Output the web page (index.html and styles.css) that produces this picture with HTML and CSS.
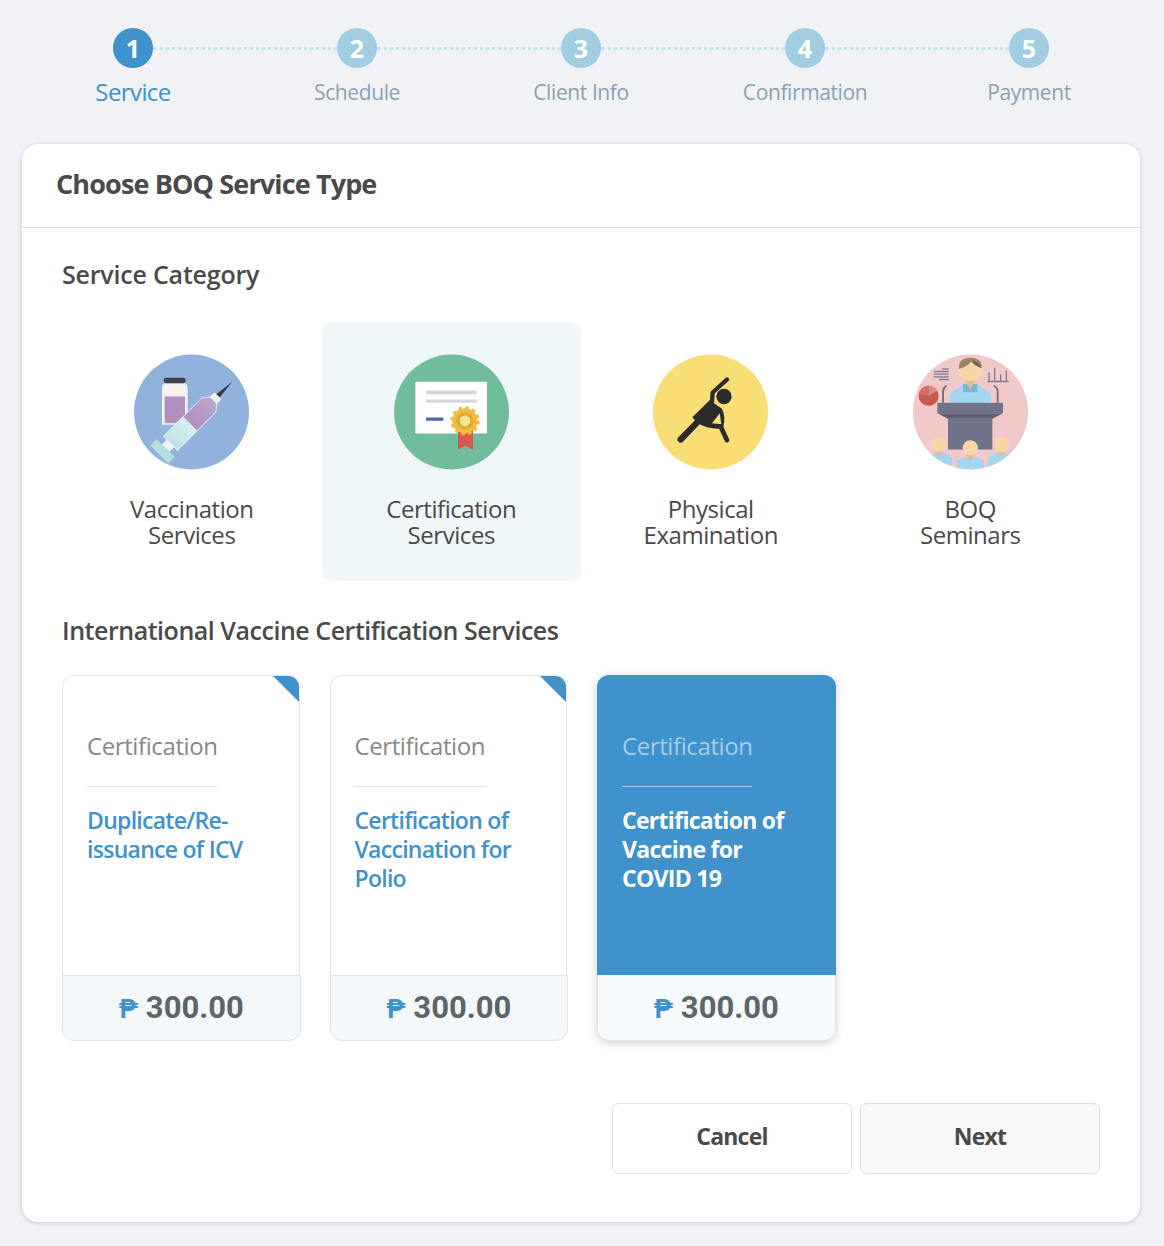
FILE: index.html
```html
<!DOCTYPE html>
<html lang="en">
<head>
<meta charset="utf-8">
<title>Choose BOQ Service Type</title>
<link rel="stylesheet" href="styles.css">
</head>
<body>
<ol class="stepper">
  <li class="step is-current"><span class="step-num">1</span><span class="step-label">Service</span></li>
  <li class="step"><span class="step-num">2</span><span class="step-label">Schedule</span></li>
  <li class="step"><span class="step-num">3</span><span class="step-label">Client Info</span></li>
  <li class="step"><span class="step-num">4</span><span class="step-label">Confirmation</span></li>
  <li class="step"><span class="step-num">5</span><span class="step-label">Payment</span></li>
</ol>
<main class="panel">
  <h1 class="panel-title">Choose BOQ Service Type</h1>
  <div class="panel-body">
    <h2 class="section-title">Service Category</h2>
    <div class="tiles">
      <div class="tile">
        <svg class="tile-icon" viewBox="42 42 345 345">
          <defs>
            <linearGradient id="pur" x1="0" y1="0" x2="1" y2="0"><stop offset="0" stop-color="#b18fc0"/><stop offset="1" stop-color="#bba6cb"/></linearGradient>
            <linearGradient id="bar" x1="0" y1="0" x2="1" y2="0"><stop offset="0" stop-color="#bfe2e3"/><stop offset="1" stop-color="#d8eeee"/></linearGradient>
          </defs>
          <circle cx="214.5" cy="214.5" r="172.5" fill="#91b2dc"/>
          <path d="M133 128Q126 132 126 146V253H203V146Q203 132 196 128z" fill="#f6f0f1"/>
          <rect x="134" y="168" width="61" height="80" fill="#b08fbe"/>
          <rect x="131" y="112" width="66" height="16" rx="7" fill="#3d4149"/>
          <g transform="translate(128 332) rotate(-45)">
            <path d="M232-7L295 0 232 7z" fill="#33363d"/>
            <rect x="216" y="-15" width="19" height="30" rx="4" fill="#e8f4f4"/>
            <rect x="-14" y="-38" width="27" height="76" fill="#b6dedd"/>
            <rect x="13" y="-16" width="22" height="32" fill="#eef7f6"/>
            <path d="M32-31H196L218-14V14L196 31H32z" fill="#eef6f6"/>
            <path d="M34-29H117V29H34z" fill="url(#bar)"/>
            <path d="M117-29H195L215-13V13L195 29H117z" fill="url(#pur)"/>
          </g>
        </svg>
        <p class="tile-label">Vaccination<br>Services</p>
      </div>
      <div class="tile is-active">
        <svg class="tile-icon" viewBox="42 42 345 345">
          <circle cx="214.5" cy="214.5" r="172.5" fill="#71bd9b"/>
          <rect x="106" y="124" width="215" height="155" rx="2" fill="#fff"/>
          <rect x="138" y="150" width="152" height="11" rx="2" fill="#d6d6de"/>
          <rect x="138" y="177" width="152" height="10" rx="2" fill="#d6d6de"/>
          <rect x="138" y="231" width="52" height="10" rx="2" fill="#4a67ae"/>
          <path d="M234 262H279V328L256 315 234 328z" fill="#d9584d"/>
          <circle cx="255" cy="241" r="38" fill="#f2bc41"/>
          <circle cx="255" cy="241" r="40" fill="none" stroke="#f2bc41" stroke-width="8" stroke-dasharray="10.47 10.47"/>
          <circle cx="255" cy="241" r="26" fill="#e0a93c"/>
          <circle cx="255" cy="241" r="16" fill="#f5e690"/>
        </svg>
        <p class="tile-label">Certification<br>Services</p>
      </div>
      <div class="tile">
        <svg class="tile-icon" viewBox="40 42 345 345">
          <circle cx="212.5" cy="214.5" r="172.5" fill="#f9de75"/>
          <circle cx="253" cy="168" r="23" fill="#2b2b2b"/>
          <path d="M262 117L219 156 217 184" fill="none" stroke="#2b2b2b" stroke-width="13" stroke-linecap="round" stroke-linejoin="round"/>
          <path d="M123 297L182 236" fill="none" stroke="#2b2b2b" stroke-width="19" stroke-linecap="round"/>
          <path d="M243 258L262 299" fill="none" stroke="#2b2b2b" stroke-width="14" stroke-linecap="round"/>
          <path fill-rule="evenodd" d="M210 179L246 204Q260 226 250 264Q205 268 172 247L158 230zM240 218L217 248 245 251z" fill="#2b2b2b"/>
        </svg>
        <p class="tile-label">Physical<br>Examination</p>
      </div>
      <div class="tile">
        <svg class="tile-icon" viewBox="40 42 345 345">
          <defs><clipPath id="disc"><circle cx="212.5" cy="214.5" r="172.5"/></clipPath></defs>
          <circle cx="212.5" cy="214.5" r="172.5" fill="#f2c9c9"/>
          <g clip-path="url(#disc)">
            <path d="M150 190V160L190 130H233L273 160V190z" fill="#a4d6f2"/>
            <rect x="190" y="130" width="43" height="25" fill="#7fb8ce"/>
            <path d="M197 118H226L212 148z" fill="#e8b98b"/>
            <circle cx="212" cy="87" r="35" fill="#f8d6a8"/>
            <path d="M178 85Q175 52 212 52Q248 52 246 82Q228 78 215 62Q205 78 178 85z" fill="#9c8468"/>
            <path d="M215 62Q235 58 246 82Q228 78 215 62z" fill="#75614c"/>
            <path d="M130 187V152Q130 142 141 135" fill="none" stroke="#70738a" stroke-width="6"/>
            <path d="M294 187V152Q294 142 282 135" fill="none" stroke="#70738a" stroke-width="6"/>
            <rect x="113" y="187" width="197" height="31" fill="#70738a"/>
            <path d="M113 218H310L278 235H145z" fill="#5d5f75"/>
            <rect x="145" y="235" width="133" height="92" fill="#70738a"/>
            <circle cx="87" cy="166" r="30" fill="#c9594f"/>
            <path d="M87 166V136A30 30 0 0 1 113 151z" fill="#dc8a82"/>
            <path d="M87 166L58 160A30 30 0 0 1 87 136z" fill="#d56e64"/>
            <path d="M127 85h20M102 93h45M102 101h45M102 109h45M118 117h29" stroke="#7b7d92" stroke-width="4"/>
            <path d="M263 123h64M268 123v-27M285 123V82M303 123v-22M320 123V90" stroke="#7b7d92" stroke-width="4" fill="none"/>
            <path d="M97 342L117 330 157 350V395H60V345z" fill="#a4d6f2"/>
            <path d="M171 360L212 345 253 360V395H171z" fill="#a4d6f2"/>
            <path d="M265 350L306 330 326 342 365 345V395H265z" fill="#a4d6f2"/>
            <path d="M104 330H130L117 352zM199 340H225L212 362zM293 330H319L306 352z" fill="#e8b98b"/>
            <circle cx="117" cy="312" r="23" fill="#f8d6a8"/>
            <circle cx="212" cy="322" r="23" fill="#f8d6a8"/>
            <circle cx="306" cy="312" r="23" fill="#f8d6a8"/>
          </g>
        </svg>
        <p class="tile-label">BOQ<br>Seminars</p>
      </div>
    </div>
    <h2 class="section-title section-title-services">International Vaccine Certification Services</h2>
    <div class="services">
      <article class="service is-flagged">
        <div class="service-main">
          <p class="service-kind">Certification</p>
          <h3 class="service-name">Duplicate/Re-<br>issuance of ICV</h3>
        </div>
        <p class="service-price"><span class="peso">₱</span> 300.00</p>
      </article>
      <article class="service is-flagged">
        <div class="service-main">
          <p class="service-kind">Certification</p>
          <h3 class="service-name">Certification of<br>Vaccination for<br>Polio</h3>
        </div>
        <p class="service-price"><span class="peso">₱</span> 300.00</p>
      </article>
      <article class="service is-selected">
        <div class="service-main">
          <p class="service-kind">Certification</p>
          <h3 class="service-name">Certification of<br>Vaccine for<br>COVID 19</h3>
        </div>
        <p class="service-price"><span class="peso">₱</span> 300.00</p>
      </article>
    </div>
    <div class="actions">
      <button class="btn" type="button">Cancel</button>
      <button class="btn btn-next" type="button">Next</button>
    </div>
  </div>
</main>
</body>
</html>
```

FILE: styles.css
```css
* { box-sizing: border-box; }
html, body { margin: 0; }
body {
  background: #f0f2f6;
  font-family: "Open Sans", "Noto Sans", sans-serif;
  color: #4a4a4a;
  padding: 28px 21px 24px;
}
h1, h2, h3, p, ol { margin: 0; padding: 0; }

.stepper { display: grid; grid-template-columns: repeat(5, 224px); list-style: none; }
.step { position: relative; display: flex; flex-direction: column; align-items: center; }
.step:not(:last-child)::after {
  content: "";
  position: absolute;
  left: 132px;
  width: 184px;
  top: 19px;
  border-top: 3px dotted #bfe3f5;
}
.step-num {
  width: 40px; height: 40px; border-radius: 50%;
  background: #a3cde3; color: #fff;
  display: flex; align-items: center; justify-content: center;
  font-size: 25px; font-weight: 700;
}
.step-label { margin-top: 9px; font-size: 21px; letter-spacing: -.4px; line-height: 30px; color: #8ba2b2; }
.is-current .step-num { background: #3f92cb; }
.is-current .step-label { color: #3f92cb; font-size: 24px; letter-spacing: -.6px; margin-top: 8px; line-height: 31px; }

.panel {
  margin: 37px 1px 0;
  width: 1118px;
  height: 1078px;
  background: #fff;
  border-radius: 16px;
  box-shadow: 0 1px 4px rgba(60, 70, 90, .22);
}
.panel-title {
  height: 84px;
  padding: 21px 34px 0;
  font-size: 27px; letter-spacing: -.87px; line-height: 38px; font-weight: 700; color: #4a4a4a;
  border-bottom: 1px solid #dcdfe3;
}
.panel-body { padding: 29px 40px 0; }
.section-title { font-size: 25px; letter-spacing: -.2px; line-height: 34px; font-weight: 600; color: #4a4a4a; }
.section-title-services { margin-top: 32px; letter-spacing: -.47px; }

.tiles { display: grid; grid-template-columns: repeat(4, 259.5px); margin-top: 31px; }
.tile { height: 259px; padding-top: 32px; display: flex; flex-direction: column; align-items: center; border-radius: 10px; }
.tile.is-active { background: #eff7f9; }
.tile-icon { width: 115px; height: 116px; display: block; }
.tile-label { margin-top: 26px; font-size: 24px; letter-spacing: -.45px; line-height: 26px; text-align: center; color: #4a4a4a; }

.services { display: flex; gap: 29px; margin-top: 28px; }
.service {
  position: relative;
  width: 238.5px; height: 366px;
  display: flex; flex-direction: column;
  border-radius: 12px;
}
.service-main {
  flex: 1;
  margin-right: 1px;
  padding: 55px 24px 0;
  background: #fff;
  border: 1px solid #e6e6e6; border-bottom: 0;
  border-radius: 12px 12px 0 0;
  overflow: hidden;
  position: relative;
}
.is-flagged .service-main::after {
  content: "";
  position: absolute; top: 0; right: 0;
  border-style: solid;
  border-width: 0 26px 26px 0;
  border-color: transparent #3f92cb transparent transparent;
}
.service-kind {
  width: 130px; height: 56px;
  font-size: 24px; letter-spacing: -.4px; line-height: 30px; color: #888;
  border-bottom: 1px solid #e2e2e2;
}
.service-name { margin-top: 19px; font-size: 23px; letter-spacing: -.72px; line-height: 29px; font-weight: 600; color: #3f92cb; }
.service-price {
  height: 66px;
  background: #f4f8fb;
  border: 1px solid #dfe5ea;
  border-radius: 0 0 12px 12px;
  font-family: Roboto, sans-serif;
  font-size: 31px; line-height: 64px; font-weight: 700; text-align: center; color: #5c6669;
}
.peso { color: #3f92cb; font-size: 26px; }
.is-selected { box-shadow: 0 2px 8px rgba(60, 70, 90, .25); }
.is-selected .service-main { background: #3f92cb; border: 0; margin: 0; padding: 56px 25px 0; }
.is-selected .service-kind { color: #a3cde8; border-bottom-color: #a3cde8; }
.is-selected .service-name { color: #fff; font-weight: 700; letter-spacing: -.7px; }
.is-selected .service-price { border-top: 0; padding-top: 1px; background: #f6fafd; }

.actions { display: flex; justify-content: flex-end; gap: 8px; margin-top: 62px; }
.btn {
  width: 240px; height: 71px;
  padding: 0 0 5px;
  background: #fff;
  border: 1px solid #e2e2e2; border-radius: 7px;
  font: inherit; font-size: 23px; letter-spacing: -.8px; font-weight: 700; color: #4a4a4a;
}
.btn-next { background: #fafafa; border-color: #dcdcdc; }
```
